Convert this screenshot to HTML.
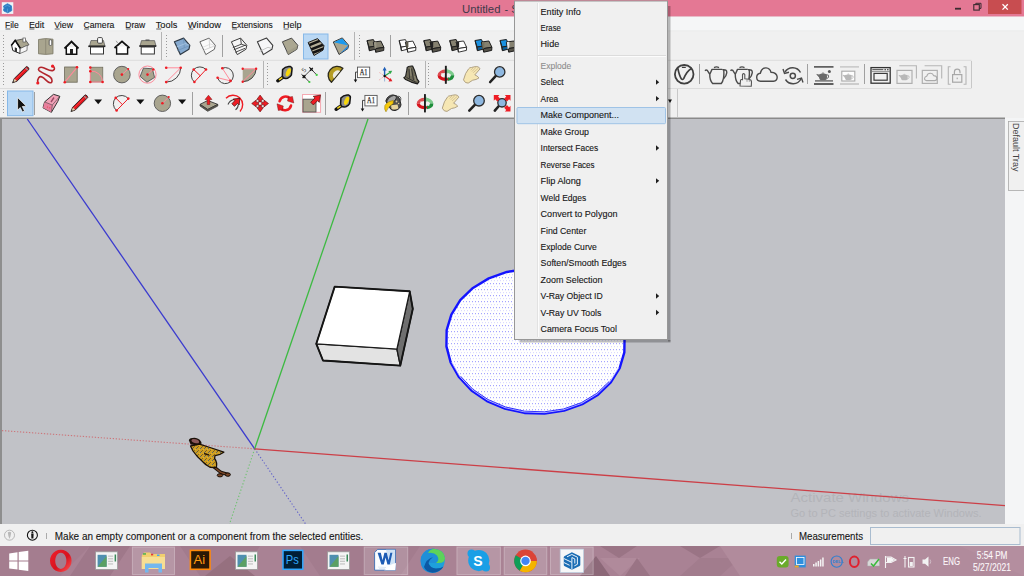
<!DOCTYPE html>
<html><head><meta charset="utf-8"><style>
html,body{margin:0;padding:0;width:1024px;height:576px;overflow:hidden;background:#f0f0f0}
svg{display:block;font-family:'Liberation Sans',sans-serif}
</style></head><body>
<svg width="1024" height="576" viewBox="0 0 1024 576" style="font-family:'Liberation Sans',sans-serif">
<rect x="0" y="0" width="1024" height="576" fill="#f0f0f0"/>
<rect x="0" y="0" width="1024" height="16.5" fill="#e47894"/>
<rect x="0" y="16" width="1024" height="0.7" fill="#d46a86"/>
<rect x="0" y="16.5" width="1024" height="14.5" fill="#f5f6f7"/>
<rect x="0" y="30.5" width="1024" height="1" fill="#e8e8e8"/>
<text x="462" y="12.6" font-size="11" fill="#3f3a4a" textLength="38.5" lengthAdjust="spacingAndGlyphs">Untitled</text><text x="504.5" y="12.6" font-size="11" fill="#3f3a4a">- S</text>
<rect x="1.8" y="2.2" width="11.5" height="11.7" fill="#eef4f8"/>
<path d="M7.5 3.7 L11.4 5.8 L11.8 10.6 L7.8 12.8 L3.8 11 L3.6 8.8 L4.8 8.2 L3.5 7.2 L3.8 5.8 Z" fill="#2b7bc2" stroke="#2b7bc2" stroke-width="0.8" stroke-linejoin="round"/>
<path d="M4.6 6.6 L7.4 5.4 L10 6.6 M7.4 8.6 L7.4 12" fill="none" stroke="#6aaee0" stroke-width="0.6"/>
<rect x="988" y="0" width="33.5" height="14" fill="#c84d50"/>
<path d="M1002.5 4.3 L1007.8 9.6 M1007.8 4.3 L1002.5 9.6" stroke="#fff" stroke-width="1.3"/>
<rect x="955" y="7.8" width="6" height="1.8" fill="#3a2a30"/>
<rect x="973.8" y="4.6" width="5.5" height="5.5" fill="none" stroke="#3a2a30" stroke-width="1.1"/>
<path d="M975.8 4.6 V3.3 H981 V8.4 H979.3" fill="none" stroke="#3a2a30" stroke-width="1"/>
<text x="5.0" y="28" font-size="9.5" fill="#151515" stroke="#151515" stroke-width="0.12" textLength="13.75" lengthAdjust="spacingAndGlyphs">File</text>
<rect x="5.5" y="28.6" width="5" height="0.8" fill="#333"/>
<text x="28.9" y="28" font-size="9.5" fill="#151515" stroke="#151515" stroke-width="0.12" textLength="15.300000000000004" lengthAdjust="spacingAndGlyphs">Edit</text>
<rect x="29.4" y="28.6" width="5" height="0.8" fill="#333"/>
<text x="54.2" y="28" font-size="9.5" fill="#151515" stroke="#151515" stroke-width="0.12" textLength="18.799999999999997" lengthAdjust="spacingAndGlyphs">View</text>
<rect x="54.7" y="28.6" width="5" height="0.8" fill="#333"/>
<text x="83.5" y="28" font-size="9.5" fill="#151515" stroke="#151515" stroke-width="0.12" textLength="30.900000000000006" lengthAdjust="spacingAndGlyphs">Camera</text>
<rect x="84" y="28.6" width="5" height="0.8" fill="#333"/>
<text x="125.3" y="28" font-size="9.5" fill="#151515" stroke="#151515" stroke-width="0.12" textLength="20.000000000000014" lengthAdjust="spacingAndGlyphs">Draw</text>
<rect x="125.8" y="28.6" width="5" height="0.8" fill="#333"/>
<text x="155.75" y="28" font-size="9.5" fill="#151515" stroke="#151515" stroke-width="0.12" textLength="21.55000000000001" lengthAdjust="spacingAndGlyphs">Tools</text>
<rect x="156.25" y="28.6" width="5" height="0.8" fill="#333"/>
<text x="187.8" y="28" font-size="9.5" fill="#151515" stroke="#151515" stroke-width="0.12" textLength="33.19999999999999" lengthAdjust="spacingAndGlyphs">Window</text>
<rect x="188.3" y="28.6" width="5" height="0.8" fill="#333"/>
<text x="231.5" y="28" font-size="9.5" fill="#151515" stroke="#151515" stroke-width="0.12" textLength="41.19999999999999" lengthAdjust="spacingAndGlyphs">Extensions</text>
<rect x="232" y="28.6" width="5" height="0.8" fill="#333"/>
<text x="283.1" y="28" font-size="9.5" fill="#151515" stroke="#151515" stroke-width="0.12" textLength="18.5" lengthAdjust="spacingAndGlyphs">Help</text>
<rect x="283.6" y="28.6" width="5" height="0.8" fill="#333"/>
<rect x="0" y="31.5" width="1024" height="86.5" fill="#f0f0f0"/>
<rect x="0" y="59.8" width="971.5" height="1" fill="#dcdcdc"/>
<rect x="0" y="88" width="971.5" height="1" fill="#dcdcdc"/>
<rect x="3" y="35" width="1" height="1" fill="#9a9a9a"/>
<rect x="3" y="38" width="1" height="1" fill="#9a9a9a"/>
<rect x="3" y="41" width="1" height="1" fill="#9a9a9a"/>
<rect x="3" y="44" width="1" height="1" fill="#9a9a9a"/>
<rect x="3" y="47" width="1" height="1" fill="#9a9a9a"/>
<rect x="3" y="50" width="1" height="1" fill="#9a9a9a"/>
<rect x="3" y="53" width="1" height="1" fill="#9a9a9a"/>
<rect x="3" y="56" width="1" height="1" fill="#9a9a9a"/>
<rect x="166" y="35" width="1" height="1" fill="#9a9a9a"/>
<rect x="166" y="38" width="1" height="1" fill="#9a9a9a"/>
<rect x="166" y="41" width="1" height="1" fill="#9a9a9a"/>
<rect x="166" y="44" width="1" height="1" fill="#9a9a9a"/>
<rect x="166" y="47" width="1" height="1" fill="#9a9a9a"/>
<rect x="166" y="50" width="1" height="1" fill="#9a9a9a"/>
<rect x="166" y="53" width="1" height="1" fill="#9a9a9a"/>
<rect x="166" y="56" width="1" height="1" fill="#9a9a9a"/>
<rect x="359" y="35" width="1" height="1" fill="#9a9a9a"/>
<rect x="359" y="38" width="1" height="1" fill="#9a9a9a"/>
<rect x="359" y="41" width="1" height="1" fill="#9a9a9a"/>
<rect x="359" y="44" width="1" height="1" fill="#9a9a9a"/>
<rect x="359" y="47" width="1" height="1" fill="#9a9a9a"/>
<rect x="359" y="50" width="1" height="1" fill="#9a9a9a"/>
<rect x="359" y="53" width="1" height="1" fill="#9a9a9a"/>
<rect x="359" y="56" width="1" height="1" fill="#9a9a9a"/>
<rect x="161" y="32" width="1" height="28" fill="#b4b4b4"/>
<rect x="354" y="32" width="1" height="28" fill="#b4b4b4"/>
<rect x="222" y="35" width="1" height="22" fill="#a0a0a0"/>
<rect x="390" y="35" width="1" height="22" fill="#a0a0a0"/>
<rect x="3" y="63" width="1" height="1" fill="#9a9a9a"/>
<rect x="3" y="66" width="1" height="1" fill="#9a9a9a"/>
<rect x="3" y="69" width="1" height="1" fill="#9a9a9a"/>
<rect x="3" y="72" width="1" height="1" fill="#9a9a9a"/>
<rect x="3" y="75" width="1" height="1" fill="#9a9a9a"/>
<rect x="3" y="78" width="1" height="1" fill="#9a9a9a"/>
<rect x="3" y="81" width="1" height="1" fill="#9a9a9a"/>
<rect x="3" y="84" width="1" height="1" fill="#9a9a9a"/>
<rect x="267" y="63" width="1" height="1" fill="#9a9a9a"/>
<rect x="267" y="66" width="1" height="1" fill="#9a9a9a"/>
<rect x="267" y="69" width="1" height="1" fill="#9a9a9a"/>
<rect x="267" y="72" width="1" height="1" fill="#9a9a9a"/>
<rect x="267" y="75" width="1" height="1" fill="#9a9a9a"/>
<rect x="267" y="78" width="1" height="1" fill="#9a9a9a"/>
<rect x="267" y="81" width="1" height="1" fill="#9a9a9a"/>
<rect x="267" y="84" width="1" height="1" fill="#9a9a9a"/>
<rect x="428" y="63" width="1" height="1" fill="#9a9a9a"/>
<rect x="428" y="66" width="1" height="1" fill="#9a9a9a"/>
<rect x="428" y="69" width="1" height="1" fill="#9a9a9a"/>
<rect x="428" y="72" width="1" height="1" fill="#9a9a9a"/>
<rect x="428" y="75" width="1" height="1" fill="#9a9a9a"/>
<rect x="428" y="78" width="1" height="1" fill="#9a9a9a"/>
<rect x="428" y="81" width="1" height="1" fill="#9a9a9a"/>
<rect x="428" y="84" width="1" height="1" fill="#9a9a9a"/>
<rect x="263" y="61" width="1" height="27" fill="#b4b4b4"/>
<rect x="425" y="61" width="1" height="27" fill="#b4b4b4"/>
<rect x="3" y="91" width="1" height="1" fill="#9a9a9a"/>
<rect x="3" y="94" width="1" height="1" fill="#9a9a9a"/>
<rect x="3" y="97" width="1" height="1" fill="#9a9a9a"/>
<rect x="3" y="100" width="1" height="1" fill="#9a9a9a"/>
<rect x="3" y="103" width="1" height="1" fill="#9a9a9a"/>
<rect x="3" y="106" width="1" height="1" fill="#9a9a9a"/>
<rect x="3" y="109" width="1" height="1" fill="#9a9a9a"/>
<rect x="3" y="112" width="1" height="1" fill="#9a9a9a"/>
<rect x="34" y="92" width="1" height="23" fill="#a0a0a0"/>
<rect x="192" y="92" width="1" height="23" fill="#a0a0a0"/>
<rect x="325" y="92" width="1" height="23" fill="#a0a0a0"/>
<rect x="408" y="92" width="1" height="23" fill="#a0a0a0"/>
<rect x="514" y="88" width="1" height="29" fill="#b4b4b4"/>
<rect x="699" y="64" width="1" height="20" fill="#a0a0a0"/>
<rect x="807" y="64" width="1" height="20" fill="#a0a0a0"/>
<rect x="864" y="64" width="1" height="20" fill="#a0a0a0"/>
<rect x="971" y="61" width="1" height="27" fill="#c8c8c8"/>
<rect x="677" y="89" width="1" height="28" fill="#c8c8c8"/>
<path d="M668 99.5 L672 99.5 L670 103 Z" fill="#111"/>
<rect x="303.5" y="34" width="24.5" height="25" fill="#bad8f4" stroke="#86b8e8" stroke-width="1"/>
<rect x="7.5" y="91" width="25.5" height="24.7" fill="#bad8f4" stroke="#86b8e8" stroke-width="1"/>
<path d="M15.2 40.5 L24.6 38.7 L29 44.8 L20.3 48.5 Z" fill="#a9a58f" stroke="#444" stroke-width="0.8"/>
<rect x="23" y="38" width="2.6" height="4" fill="#fff" stroke="#555" stroke-width="0.7"/>
<path d="M11.6 45.2 L15.2 40.5 L20.3 48.5 L20 53.5 L12.8 50.5 Z" fill="#fff" stroke="#222" stroke-width="1"/>
<path d="M11.3 45.5 L15.2 40.3 L20.6 48.8" fill="none" stroke="#111" stroke-width="1.6"/>
<path d="M14.8 47.2 L17 48.3 L17 52.3 L14.8 51.2 Z" fill="#333"/>
<path d="M20.3 48.5 L27.2 45.3 L27 50.5 L20 53.5 Z" fill="#f6f6f6" stroke="#555" stroke-width="0.7"/>
<path d="M38.5 39.5 Q45.5 37.8 53 39.2 L53 53.8 Q45.5 55 38.5 53.8 Z" fill="#a9a58f" stroke="#7a7766" stroke-width="0.8"/>
<rect x="45.3" y="38.5" width="0.9" height="16" fill="#8a8774"/>
<rect x="49.2" y="39.8" width="2.6" height="5.6" rx="1" fill="#fff" stroke="#444" stroke-width="0.8"/>
<path d="M64.5 48.5 L71.5 41.5 L78.5 48.5" fill="none" stroke="#111" stroke-width="1.8"/>
<path d="M66.3 47 L66.3 54.3 L76.7 54.3 L76.7 47" fill="#fff" stroke="#111" stroke-width="1.5"/>
<rect x="70" y="49" width="3" height="5.3" fill="#222"/>
<path d="M89.5 46.3 L91 40.5 L103.5 40.5 L105 46.3 Z" fill="#a9a58f" stroke="#555" stroke-width="0.7"/>
<rect x="88.3" y="45.5" width="17" height="1.6" fill="#222"/>
<rect x="90.5" y="47" width="13" height="7" fill="#fff" stroke="#333" stroke-width="1"/>
<rect x="97.6" y="37.6" width="4.8" height="5.6" rx="1" fill="#fff" stroke="#333" stroke-width="0.9"/>
<path d="M114.5 48 L122 41.3 L129.5 48" fill="none" stroke="#111" stroke-width="1.7"/>
<path d="M116.6 46.5 L116.6 54 L127.6 54 L127.6 46.5" fill="#fff" stroke="#111" stroke-width="1.4"/>
<path d="M116.2 40.8 L117.6 43" stroke="#888" stroke-width="0.8"/>
<path d="M140 46 L141.5 40.6 L154.5 40.6 L156 46 Z" fill="#a9a58f" stroke="#555" stroke-width="0.7"/>
<rect x="139.3" y="45.3" width="17" height="1.6" fill="#222"/>
<rect x="141.2" y="47" width="13.2" height="7" fill="#fff" stroke="#333" stroke-width="1"/>
<rect x="145.5" y="39.5" width="4" height="1.3" fill="#555"/>
<polygon points="174.4,41.8 183.6,38.1 189.8,45.3 188.9,49.3 180.3,54.6" fill="#86aad0" stroke="#2f3a45" stroke-width="1.2" stroke-linejoin="round"/>
<path d="M183.6 38.4 L184.3 47.8 L177.3 50.6 M184.3 47.8 L189.3 45.8" fill="none" stroke="#6a8fb5" stroke-width="0.7"/>
<path d="M176.5 47 L185.5 43.5 L189 45" fill="none" stroke="#a9c6e2" stroke-width="0.8"/>
<polygon points="199.9,41.8 209.1,38.1 215.3,45.3 214.4,49.3 205.8,54.6" fill="#fbfbfb" stroke="#555" stroke-width="0.9" stroke-linejoin="round"/>
<path d="M209.1 38.4 L209.8 47.8 L202.8 50.6 M209.8 47.8 L214.8 45.8" fill="none" stroke="#c4c4c4" stroke-width="0.7"/>
<path d="M202.5 47.5 L210.5 44 L214.8 45.5" fill="none" stroke="#d0d0d0" stroke-width="0.6"/>
<polygon points="231.4,41.8 240.6,38.1 246.8,45.3 245.9,49.3 237.3,54.6" fill="#f7f7f7" stroke="#3a3a3a" stroke-width="1.0" stroke-linejoin="round"/>
<path d="M240.6 38.4 L241.3 44.2 L246.3 45.8 M241.3 44.2 L232.8 47.6 M233.8 49.8 L245.3 45.2 M235.3 52.3 L245 48.3" fill="none" stroke="#3a3a3a" stroke-width="0.9"/>
<polygon points="257.4,41.8 266.6,38.1 272.8,45.3 271.9,49.3 263.3,54.6" fill="#f6f6f8" stroke="#3a3a3a" stroke-width="1.1" stroke-linejoin="round"/>
<path d="M259.5 51.5 L268 47.3 L271.8 48.5" fill="none" stroke="#b0b0b0" stroke-width="0.7"/>
<polygon points="282.4,41.8 291.6,38.1 297.8,45.3 296.9,49.3 288.3,54.6" fill="#aba791" stroke="#4a4a4a" stroke-width="1.0" stroke-linejoin="round"/>
<path d="M286 52.5 L288.3 54.3 L297 49.2 L297.6 45.8 Z" fill="#9a9682" opacity="0.6"/>
<defs><clipPath id="cc6"><polygon points="308.1,42.5 317.6,38.6 324,45.7 323,50.1 314,55.5"/></clipPath></defs>
<polygon points="308.1,42.5 317.6,38.6 324,45.7 323,50.1 314,55.5" fill="#b4ae98"/>
<g clip-path="url(#cc6)"><path d="M300 43.5 L330 31.5 M302 48 L332 36 M304 52.3 L334 40.3 M306 55.5 L336 43.5" stroke="#141414" stroke-width="2.6"/></g>
<polygon points="308.1,42.5 317.6,38.6 324,45.7 323,50.1 314,55.5" fill="none" stroke="#1e1e1e" stroke-width="1" stroke-linejoin="round"/>
<polygon points="333.25,42 342.3,37.9 348.6,45.2 347.9,48.6 339.1,54.5" fill="#a9a58f" stroke="#3a3a3a" stroke-width="1" stroke-linejoin="round"/>
<path d="M333.8 42.2 L342.3 38.4 L348.2 45.4 Z" fill="#1a9af0"/>
<path d="M348.2 45.6 L347.6 48.5 L339.8 53.8 Z" fill="#1e88e5"/>
<polygon points="367,40.6 373.4,39.6 376.4,45.8 369.2,47.2" fill="#858170" stroke="#1e1e1e" stroke-width="1" stroke-linejoin="round"/>
<polygon points="369.2,47.2 376.4,45.8 376.2,49 369.4,50.8" fill="#57544a" stroke="#1e1e1e" stroke-width="1" stroke-linejoin="round"/>
<path d="M367.1 40.8 L369.4 50.6" stroke="#1e1e1e" stroke-width="1"/>
<polygon points="373.3,42.1 380.9,41.1 383.9,47.3 375.5,48.7" fill="#858170" stroke="#1e1e1e" stroke-width="1" stroke-linejoin="round"/>
<polygon points="375.5,48.7 383.9,47.3 383.7,50.5 375.7,52.3" fill="#57544a" stroke="#1e1e1e" stroke-width="1" stroke-linejoin="round"/>
<path d="M373.4 42.3 L375.7 52.1" stroke="#1e1e1e" stroke-width="1"/>
<polygon points="373.8,42.2 376.4,41.8 376.4,46.6 375.4,49.1 374.6,49.3" fill="#9a9684"/>
<polygon points="399,40.6 405.4,39.6 408.4,45.8 401.2,47.2" fill="#fff" stroke="#222" stroke-width="0.9" stroke-linejoin="round"/>
<polygon points="401.2,47.2 408.4,45.8 408.2,49 401.4,50.8" fill="#fff" stroke="#222" stroke-width="0.9" stroke-linejoin="round"/>
<path d="M399.3 40.8 L401.4 50.6" stroke="#222" stroke-width="0.9"/>
<polygon points="405.3,42.1 412.9,41.1 415.9,47.3 407.5,48.7" fill="#fff" stroke="#222" stroke-width="0.9" stroke-linejoin="round"/>
<polygon points="407.5,48.7 415.9,47.3 415.7,50.5 407.7,52.3" fill="#fff" stroke="#222" stroke-width="0.9" stroke-linejoin="round"/>
<path d="M405.6 42.3 L407.7 52.1" stroke="#222" stroke-width="0.9"/>
<polygon points="405.8,42.2 408.4,41.8 408.4,46.6 407.4,49.1 406.6,49.3" fill="#5d5a4c"/>
<polygon points="423.8,40.6 430.2,39.6 433.2,45.8 426,47.2" fill="#858170" stroke="#1e1e1e" stroke-width="1" stroke-linejoin="round"/>
<polygon points="426,47.2 433.2,45.8 433,49 426.2,50.8" fill="#57544a" stroke="#1e1e1e" stroke-width="1" stroke-linejoin="round"/>
<path d="M423.9 40.8 L426.2 50.6" stroke="#1e1e1e" stroke-width="1"/>
<polygon points="430.1,42.1 437.7,41.1 440.7,47.3 432.3,48.7" fill="#858170" stroke="#1e1e1e" stroke-width="1" stroke-linejoin="round"/>
<polygon points="432.3,48.7 440.7,47.3 440.5,50.5 432.5,52.3" fill="#57544a" stroke="#1e1e1e" stroke-width="1" stroke-linejoin="round"/>
<path d="M430.2 42.3 L432.5 52.1" stroke="#1e1e1e" stroke-width="1"/>
<polygon points="430.6,42.2 433.2,41.8 433.2,46.6 432.2,49.1 431.4,49.3" fill="#222"/>
<polygon points="449.7,40.5 456.1,39.5 459.1,45.7 451.9,47.1" fill="#858170" stroke="#1e1e1e" stroke-width="1" stroke-linejoin="round"/>
<polygon points="451.9,47.1 459.1,45.7 458.9,48.9 452.1,50.7" fill="#57544a" stroke="#1e1e1e" stroke-width="1" stroke-linejoin="round"/>
<path d="M449.8 40.7 L452.1 50.5" stroke="#1e1e1e" stroke-width="1"/>
<polygon points="456,42 463.6,41 466.6,47.2 458.2,48.6" fill="#fff" stroke="#222" stroke-width="0.9" stroke-linejoin="round"/>
<polygon points="458.2,48.6 466.6,47.2 466.4,50.4 458.4,52.2" fill="#fff" stroke="#222" stroke-width="0.9" stroke-linejoin="round"/>
<path d="M456.3 42.2 L458.4 52" stroke="#222" stroke-width="0.9"/>
<polygon points="456.5,42.1 459.1,41.7 459.1,46.5 458.1,49 457.3,49.2" fill="#222"/>
<polygon points="475,40.5 481.4,39.5 484.4,45.7 477.2,47.1" fill="#1a90e0" stroke="#1e1e1e" stroke-width="1" stroke-linejoin="round"/>
<polygon points="477.2,47.1 484.4,45.7 484.2,48.9 477.4,50.7" fill="#0d5f9a" stroke="#1e1e1e" stroke-width="1" stroke-linejoin="round"/>
<path d="M475.1 40.7 L477.4 50.5" stroke="#1e1e1e" stroke-width="1"/>
<polygon points="481.3,42 488.9,41 491.9,47.2 483.5,48.6" fill="#858170" stroke="#1e1e1e" stroke-width="1" stroke-linejoin="round"/>
<polygon points="483.5,48.6 491.9,47.2 491.7,50.4 483.7,52.2" fill="#57544a" stroke="#1e1e1e" stroke-width="1" stroke-linejoin="round"/>
<path d="M481.4 42.2 L483.7 52" stroke="#1e1e1e" stroke-width="1"/>
<polygon points="481.8,42.1 484.4,41.7 484.4,46.5 483.4,49 482.6,49.2" fill="#77735f"/>
<polygon points="500,40.5 506.4,39.5 509.4,45.7 502.2,47.1" fill="#1a90e0" stroke="#1e1e1e" stroke-width="1" stroke-linejoin="round"/>
<polygon points="502.2,47.1 509.4,45.7 509.2,48.9 502.4,50.7" fill="#0d5f9a" stroke="#1e1e1e" stroke-width="1" stroke-linejoin="round"/>
<path d="M500.1 40.7 L502.4 50.5" stroke="#1e1e1e" stroke-width="1"/>
<polygon points="506.3,42 513.9,41 516.9,47.2 508.5,48.6" fill="#858170" stroke="#1e1e1e" stroke-width="1" stroke-linejoin="round"/>
<polygon points="508.5,48.6 516.9,47.2 516.7,50.4 508.7,52.2" fill="#57544a" stroke="#1e1e1e" stroke-width="1" stroke-linejoin="round"/>
<path d="M506.4 42.2 L508.7 52" stroke="#1e1e1e" stroke-width="1"/>
<polygon points="506.8,42.1 509.4,41.7 509.4,46.5 508.4,49 507.6,49.2" fill="#e6e6e6"/>
<g transform="translate(12.6,82.8) rotate(-44.63)"><path d="M0 0 L4.2 -1.9 L21.26 -1.9 Q22.66 0 21.26 1.9 L4.2 1.9 Z" fill="#e3141c" stroke="#2a2a2a" stroke-width="0.9" stroke-linejoin="round"/><path d="M0.3 0 L4.4 -1.5 L4.4 1.5 Z" fill="#d9cfa8"/><path d="M0 0 L1.8 -0.7 L1.8 0.7 Z" fill="#222"/><rect x="19.06" y="-1.5" width="1.2" height="3" fill="#9a9a9a"/><path d="M4.4 -0.4 L18.86 -0.4" stroke="#ff5a5a" stroke-width="0.5"/></g>
<path d="M37.8 83 C37 78.5 39.5 75.5 42.5 77.2 C45 78.5 47.5 82.5 50 82.8 C53 83 52.5 78.5 49.5 76.5 C46.5 74.5 41 72.5 39 70.5 C37.5 68.5 39.5 66.8 42.5 67.5 C46 68.3 49.5 71.5 53 70.5 C55.5 69.5 54.5 66.8 52.5 66.2" fill="none" stroke="#b3262d" stroke-width="1.6"/>
<circle cx="37.8" cy="83" r="1.6" fill="#ee1c24"/><circle cx="52.6" cy="66.2" r="1.6" fill="#ee1c24"/>
<rect x="64.6" y="67" width="12.6" height="15.2" fill="#a9a58f" stroke="#6b6858" stroke-width="0.8"/>
<path d="M64.8 82.2 L77 67.3" stroke="#ff8a9a" stroke-width="1.1"/>
<circle cx="64.8" cy="82.2" r="1.3" fill="#ee1c24"/><circle cx="77" cy="67.3" r="1.3" fill="#ee1c24"/>
<rect x="90.5" y="67.2" width="12.3" height="14.8" fill="#a9a58f" stroke="#6b6858" stroke-width="0.7"/>
<path d="M90.3 71.2 A11 11 0 0 1 102.6 82 M90.3 67.5 L90.3 82 L102.6 82" fill="none" stroke="#ff8a9a" stroke-width="1"/>
<circle cx="90.3" cy="67.5" r="1.3" fill="#ee1c24"/>
<circle cx="90.3" cy="71.2" r="1.3" fill="#ee1c24"/>
<circle cx="90.3" cy="82" r="1.3" fill="#ee1c24"/>
<circle cx="102.6" cy="82" r="1.3" fill="#ee1c24"/>
<circle cx="121.9" cy="74.6" r="8.3" fill="#a9a58f" stroke="#555" stroke-width="0.9"/>
<path d="M121.9 74.6 L128.2 69" stroke="#ff8a9a" stroke-width="1"/>
<circle cx="121.9" cy="74.6" r="1.3" fill="#ee1c24"/><circle cx="128.2" cy="69" r="1.1" fill="#ee1c24"/>
<circle cx="147.5" cy="74.6" r="8.6" fill="none" stroke="#ff8a9a" stroke-width="1"/>
<polygon points="152.39,68.78 154.55,77.45 146.97,82.18 140.13,76.44 143.47,68.15" fill="#a9a58f" stroke="#555" stroke-width="0.9"/>
<path d="M147.5 74.6 L153.2 69.5" stroke="#ff8a9a" stroke-width="1"/>
<circle cx="147.5" cy="74.6" r="1.3" fill="#ee1c24"/><circle cx="153.3" cy="69.4" r="1.2" fill="#ee1c24"/>
<path d="M180.7 67.8 A14.5 14.3 0 0 1 166.2 82.1" fill="none" stroke="#444" stroke-width="1"/>
<path d="M166.2 67.8 L180.7 67.8 L166.2 82.1" fill="none" stroke="#ff8a9a" stroke-width="1"/>
<circle cx="166.2" cy="67.8" r="1.3" fill="#ee1c24"/>
<circle cx="180.7" cy="67.8" r="1.3" fill="#ee1c24"/>
<circle cx="166.2" cy="82.1" r="1.3" fill="#ee1c24"/>
<path d="M193.7 69.5 A8.6 8.6 0 0 1 206 69.5 M193.7 69.5 A8.6 8.6 0 0 0 194.4 82" fill="none" stroke="#444" stroke-width="1"/>
<path d="M193.7 69.5 L200.3 75.8 M206 69.5 L194.4 82" fill="none" stroke="#ee1c24" stroke-width="1"/>
<circle cx="193.7" cy="69.5" r="1.3" fill="#ee1c24"/>
<circle cx="206" cy="69.5" r="1.3" fill="#ee1c24"/>
<circle cx="194.4" cy="82" r="1.3" fill="#ee1c24"/>
<path d="M222.3 68.2 A8 8 0 1 1 217.6 77.7" fill="none" stroke="#444" stroke-width="1"/>
<path d="M222.3 68.2 L230.5 80.9 L217.6 77.7" fill="none" stroke="#ff8a9a" stroke-width="1"/>
<circle cx="222.3" cy="68.2" r="1.3" fill="#ee1c24"/>
<circle cx="217.6" cy="77.7" r="1.3" fill="#ee1c24"/>
<circle cx="230.5" cy="80.9" r="1.3" fill="#ee1c24"/>
<path d="M242.7 68.8 L256.1 68.8 A13.4 13 0 0 1 242.7 81.7 Z" fill="#a9a58f"/><path d="M256.1 68.8 A13.4 13 0 0 1 242.7 81.7" fill="none" stroke="#333" stroke-width="0.9"/>
<path d="M242.7 68.8 L256.1 68.8 L242.7 81.7" fill="none" stroke="#ff8a9a" stroke-width="1"/>
<circle cx="242.7" cy="68.8" r="1.2" fill="#ee1c24"/>
<circle cx="256.1" cy="68.8" r="1.2" fill="#ee1c24"/>
<circle cx="242.7" cy="81.7" r="1.2" fill="#ee1c24"/>
<path d="M283.8 76.6 L277.8 80.8" stroke="#111" stroke-width="3.4" stroke-linecap="round"/>
<path d="M284 76.4 L279 79.9" stroke="#f2d21b" stroke-width="1.6"/>
<path d="M282.6 69.4 Q285 66.6 288.7 66.4 L290.5 66.6 Q292.5 67.5 292 69.5 L291.4 75 Q290.5 77 287.5 78.2 L285.8 78.5 Q282.5 78.5 282.3 75.5 Z" fill="#8d8d8d" stroke="#151515" stroke-width="1.5" stroke-linejoin="round"/>
<ellipse cx="288.3" cy="72.3" rx="2.1" ry="4.3" transform="rotate(22 288.3 72.3)" fill="#f7d70a"/>
<path d="M301.4 74.2 L304 76.6 L309.4 82 M309 67.1 L311.4 69.3 L316.7 74.9 M304 76.6 L311.4 69.3" fill="none" stroke="#333" stroke-width="0.9"/>
<path d="M302.6 75.2 L305.4 78 M302.6 78 L305.4 75.2 M310 67.9 L312.8 70.7 M310 70.7 L312.8 67.9" stroke="#111" stroke-width="1.3"/>
<circle cx="309.4" cy="82" r="1.1" fill="#3fcf3f"/><circle cx="316.7" cy="74.9" r="1.1" fill="#3fcf3f"/>
<text x="302" y="72" font-size="6.5" fill="#444" transform="rotate(-45 304.3 69.8)">5</text>
<path d="M331.4 82.3 A9.04 9.04 0 0 1 342.9 68.35 Z" fill="#b59c22" stroke="#2c2a1c" stroke-width="1.3" stroke-linejoin="round"/>
<path d="M334 78.5 A5 5 0 0 1 340.2 71 Z" fill="#ecebe2"/>
<rect x="357.5" y="67.1" width="12.2" height="10.5" fill="#fff" stroke="#555" stroke-width="0.9"/>
<text x="359.7" y="74.7" font-size="7.2" font-family="Liberation Serif" fill="#3a3a3a" stroke="#3a3a3a" stroke-width="0.25" textLength="7.8" lengthAdjust="spacingAndGlyphs">A1</text>
<path d="M357.5 72.1 L355.5 72.1 L355.5 80" fill="none" stroke="#333" stroke-width="0.9"/>
<path d="M353.7 79.5 L357.3 79.5 L355.5 82.5 Z" fill="#111"/>
<path d="M384.6 76 L384.6 81.5" stroke="#9cb8d8" stroke-width="1"/>
<path d="M384.6 76 L379 72.3 M384.6 76 L378.5 80.5" stroke="#f0a0a0" stroke-width="0.9" stroke-dasharray="1 1"/>
<path d="M384.6 76 L384.6 69.5" stroke="#1f5fb8" stroke-width="1.4"/><path d="M382.6 70.5 L384.6 66.8 L386.6 70.5 Z" fill="#1f5fb8"/>
<path d="M384.6 76 L390 72.5" stroke="#2ea84a" stroke-width="1.4"/><path d="M388.3 71 L392.2 70.8 L390.6 74 Z" fill="#2ea84a"/>
<path d="M384.6 76 L390 79.8" stroke="#e11d25" stroke-width="1.4"/><path d="M388.5 81.5 L392.4 81.3 L390.6 78 Z" fill="#e11d25"/>
<circle cx="384.6" cy="76" r="1.2" fill="#111"/>
<path d="M407.2 67.4 Q408.4 65.7 412.6 66 L414.6 70.5 L417.2 79.2 L419 81.6 L417.4 83.9 L411.2 82.1 L405.6 79.6 L403.8 77.6 L405.6 76.4 L406.8 70.2 Z" fill="#6e6a58" stroke="#1c1c1c" stroke-width="1.1" stroke-linejoin="round"/>
<path d="M409 69 L409.6 78.5 M411.6 68.5 L413.5 80 M406.5 77.5 L416.5 82.5" stroke="#2a2a2a" stroke-width="0.8"/>
<path d="M410.3 68 L411 76 M414.5 76 L416 81" stroke="#a8a48e" stroke-width="0.6"/>
<path d="M439.2 75.2 A6.7 4.1 0 0 1 445.9 71.1" fill="none" stroke="#dd4a50" stroke-width="3.3"/>
<path d="M452.6 75.2 A6.7 4.1 0 0 0 445.9 71.1" fill="none" stroke="#7cca8c" stroke-width="3.3"/>
<path d="M439.2 75.2 A6.7 4.1 0 0 0 445.4 79.3" fill="none" stroke="#d7141c" stroke-width="3.4"/>
<path d="M452.6 75.2 A6.7 4.1 0 0 1 447.4 79.3" fill="none" stroke="#1d8e3a" stroke-width="3.3"/>
<path d="M444.9 76.3 L448.5 79.3 L444.9 82.3 Z" fill="#d7141c"/>
<path d="M447.4 68.3 L444.3 71.1 L447.4 73.9 Z" fill="#7cca8c"/>
<path d="M441.4 73.4 L443.7 74.6 M448.3 76.2 L450.1 77.2" stroke="#f4f4f4" stroke-width="1.1"/>
<rect x="444.9" y="65.8" width="1.9" height="18" fill="#1e1e1e"/>
<path d="M463.5 79.9 Q465.2 72.7 468.6 68.9 Q469.7 67.3 471.4 67.5 L473.7 66.9 L476.7 66.5 Q479.2 66.6 480 68.9 L474.8 74.9 Q477.2 75.7 479 77.9 Q476.2 79.9 472.7 80.2 L468.2 83.1 Q465.2 83.5 463.5 79.9 Z" fill="#f6e7b4" stroke="#a8987a" stroke-width="0.9" stroke-linejoin="round"/>
<path d="M470.7 70.2 L473.7 67.3 M472 71.5 L476.2 67.1 M473.2 72.7 L478.4 68.1" stroke="#c8b48a" stroke-width="0.7"/>
<path d="M496.06 75.54 L490.2 82" stroke="#222" stroke-width="2.6" stroke-linecap="round"/>
<circle cx="499.7" cy="71.9" r="5.2" fill="#8fb8e0" stroke="#2b2b2b" stroke-width="1.3"/>
<circle cx="684.2" cy="74.3" r="9.3" fill="none" stroke="#3e3e3e" stroke-width="1.8"/>
<path d="M677.9 68.6 Q679.3 75.5 681.3 78.8 Q682.6 80.4 683.8 78.4 Q686.8 71 691.4 68.4" fill="none" stroke="#3e3e3e" stroke-width="1.7" stroke-linecap="round"/>
<path d="M682.5 67.4 L685.2 67.4" stroke="#3e3e3e" stroke-width="1.4" stroke-linecap="round"/>
<path d="M705 70.8 Q706 69.6 707.3 70.4 L709.8 74.3 L712 69.4 L722.3 69.4 M709.8 74.3 Q709.6 80.5 712.6 83.5 L721.3 83.5 Q724.5 79.5 723.8 70 M722.5 69.8 Q727 69.2 726.8 72.6 Q726.3 76.5 723.6 78.8" fill="none" stroke="#4a4a4a" stroke-width="1.4" stroke-linejoin="round"/>
<path d="M714 67.6 Q716.5 66.2 719 67.6" fill="none" stroke="#4a4a4a" stroke-width="1.3"/>
<path d="M730.5 70.8 Q731.5 69.6 732.8 70.4 L735.3 74.3 L737.5 69.4 L747.8 69.4 M735.3 74.3 Q735.1 80.5 738.1 83.5 L746.8 83.5 Q750 79.5 749.3 70 M748 69.8 Q752.5 69.2 752.3 72.6 Q751.8 76.5 749.1 78.8" fill="none" stroke="#4a4a4a" stroke-width="1.4" stroke-linejoin="round"/>
<path d="M739.5 67.6 Q742 66.2 744.5 67.6" fill="none" stroke="#4a4a4a" stroke-width="1.3"/>
<path d="M740 86 L740.5 80.5 Q741 79 742.5 79.8 L742.5 74.5 Q743.5 72.8 744.8 74.5 L744.8 78.8 L749 79.3 Q751.5 79.8 751.5 82 L751.3 86.2 Z" fill="#f0f0f0" stroke="#555" stroke-width="1.1" stroke-linejoin="round"/>
<path d="M747 79.2 L747 81.8 M749.3 79.6 L749.3 81.8" stroke="#777" stroke-width="0.7"/>
<path d="M760.5 81.2 Q756.6 81 756.7 77 Q757 73.6 760.3 73.3 Q761.5 67.8 766 67.9 Q770.2 68.3 771 72.3 Q776.8 72.6 777.2 77 Q777.2 81 773.5 81.2 Z" fill="none" stroke="#4a4a4a" stroke-width="1.4" stroke-linejoin="round"/>
<path d="M785 72 A9 9 0 0 1 800.5 72.5 M801 79 A9 9 0 0 1 785.5 79.5" fill="none" stroke="#4a4a4a" stroke-width="1.5"/>
<path d="M783 69 L784.5 73.5 L789 72.3" fill="none" stroke="#4a4a4a" stroke-width="1.4"/>
<path d="M803 82.5 L801.5 78 L797 79.3" fill="none" stroke="#4a4a4a" stroke-width="1.4"/>
<circle cx="792.8" cy="75.8" r="2.6" fill="none" stroke="#4a4a4a" stroke-width="1.5"/>
<rect x="814" y="66.2" width="19.5" height="1.4" fill="#3d3d3d"/><rect x="815" y="80.2" width="18" height="1.4" fill="#6a6a6a"/><rect x="814" y="83.2" width="19.5" height="1.6" fill="#3d3d3d"/>
<path d="M819.2 74.2 Q818.4 79.4 820.8 80.2 L825.2 80.2 Q827.6 79.4 826.8 74.2 Q823 72.8 819.2 74.2 Z" fill="#6a6a6a"/>
<path d="M819.4 77.2 L816.8 74.4 L819.2 75 Z" fill="#6a6a6a" stroke="#6a6a6a" stroke-width="0.8" stroke-linejoin="round"/>
<path d="M826.6 74.8 Q829.2 74.4 828.6 77 Q828 78.4 826.2 79" fill="none" stroke="#6a6a6a" stroke-width="1"/>
<path d="M821.4 73.4 Q823 71.4 824.6 73.4 Z" fill="#6a6a6a"/>
<circle cx="829.4" cy="71.5" r="1.5" fill="#5a5a5a"/>
<rect x="840" y="66.3" width="19" height="1.2" fill="#bcbcbc"/><rect x="840" y="83.3" width="19" height="1.4" fill="#bcbcbc"/>
<rect x="841.8" y="71.2" width="13" height="9.8" fill="#fdfdfd" stroke="#aaaaaa" stroke-width="1.1"/>
<path d="M845.07 75.1 Q844.39 79.52 846.43 80.2 L850.17 80.2 Q852.21 79.52 851.53 75.1 Q848.3 73.91 845.07 75.1 Z" fill="#b8b8b8"/>
<path d="M845.24 77.65 L843.03 75.27 L845.07 75.78 Z" fill="#b8b8b8" stroke="#b8b8b8" stroke-width="0.8" stroke-linejoin="round"/>
<path d="M851.36 75.61 Q853.57 75.27 853.06 77.48 Q852.55 78.67 851.02 79.18" fill="none" stroke="#b8b8b8" stroke-width="0.85"/>
<path d="M846.94 74.42 Q848.3 72.72 849.66 74.42 Z" fill="#b8b8b8"/>
<rect x="871" y="67.6" width="19.2" height="15.6" fill="none" stroke="#333" stroke-width="1.3"/>
<rect x="872.3" y="69.1" width="11" height="1" fill="#555"/><rect x="884.5" y="68.9" width="1.4" height="1.4" fill="#444"/><rect x="887.1" y="68.9" width="1.4" height="1.4" fill="#444"/>
<rect x="871" y="70.9" width="19.2" height="0.8" fill="#777"/>
<rect x="874" y="73.4" width="13.2" height="6.8" fill="none" stroke="#3a3a3a" stroke-width="1.2"/>
<path d="M899.3 65.8 L916.4 65.8 L916.4 78.6" fill="none" stroke="#b5b5b5" stroke-width="1.1"/>
<rect x="897" y="70.4" width="15" height="13" fill="none" stroke="#b0b0b0" stroke-width="1.2"/>
<path d="M901.07 75.2 Q900.39 79.62 902.43 80.3 L906.17 80.3 Q908.21 79.62 907.53 75.2 Q904.3 74.01 901.07 75.2 Z" fill="#b8b8b8"/>
<path d="M901.24 77.75 L899.03 75.37 L901.07 75.88 Z" fill="#b8b8b8" stroke="#b8b8b8" stroke-width="0.8" stroke-linejoin="round"/>
<path d="M907.36 75.71 Q909.57 75.37 909.06 77.58 Q908.55 78.77 907.02 79.28" fill="none" stroke="#b8b8b8" stroke-width="0.85"/>
<path d="M902.94 74.52 Q904.3 72.82 905.66 74.52 Z" fill="#b8b8b8"/>
<path d="M924.6 65.8 L941.7 65.8 L941.7 78.6" fill="none" stroke="#b5b5b5" stroke-width="1.1"/>
<rect x="922.3" y="70.4" width="15" height="13" fill="none" stroke="#b0b0b0" stroke-width="1.2"/>
<path d="M926.5 80.6 Q924.4 80.5 924.6 78.3 Q924.8 76.3 926.8 76.2 Q927.6 73.2 930.5 73.3 Q933 73.5 933.6 75.6 Q936.8 75.8 936.9 78.2 Q936.9 80.5 934.6 80.6 Z" fill="none" stroke="#aaaaaa" stroke-width="1.1" stroke-linejoin="round"/>
<path d="M950.6 66.8 L948.3 66.8 L948.3 84.2 L950.6 84.2 M963.6 66.8 L966 66.8 L966 84.2 L963.6 84.2" fill="none" stroke="#b5b5b5" stroke-width="1.1"/>
<rect x="952.6" y="74.6" width="9.2" height="7.6" fill="none" stroke="#a8a8a8" stroke-width="1.2"/>
<path d="M954.4 74.6 L954.4 72 A2.8 2.8 0 0 1 960 72 L960 73.2" fill="none" stroke="#a8a8a8" stroke-width="1.2"/>
<rect x="956.6" y="77.6" width="1.2" height="1.6" fill="#aaa"/>
<path d="M17.6 97.5 L17.6 110.3 L20.2 107.6 L22.5 112 L24.5 111 L22.3 106.5 L26.3 106.2 Z" fill="#111" stroke="#fff" stroke-width="0.7" stroke-linejoin="round"/>
<path d="M44.6 101.9 L53.5 94.3 L59.8 96.3 L57.8 101.4 L51.4 112.3 L43 107.8 Z" fill="#f2a2b8" stroke="#333" stroke-width="1" stroke-linejoin="round"/>
<path d="M44.6 102 L52.3 105 L51.4 112.2 L43.1 107.7 Z" fill="#e87f9c"/>
<path d="M44.6 101.9 L52.3 105 L59.8 96.3 M52.3 105 L51.4 112.3" fill="none" stroke="#444" stroke-width="0.6"/>
<path d="M54 97.5 L51 102" stroke="#9a4a66" stroke-width="1.4"/>
<circle cx="47.5" cy="107" r="0.6" fill="#e0404a"/><circle cx="49.8" cy="107.8" r="0.6" fill="#e0404a"/>
<g transform="translate(71,111.6) rotate(-45)"><path d="M0 0 L4.2 -1.9 L21.83 -1.9 Q23.23 0 21.83 1.9 L4.2 1.9 Z" fill="#e3141c" stroke="#2a2a2a" stroke-width="0.9" stroke-linejoin="round"/><path d="M0.3 0 L4.4 -1.5 L4.4 1.5 Z" fill="#d9cfa8"/><path d="M0 0 L1.8 -0.7 L1.8 0.7 Z" fill="#222"/><rect x="19.63" y="-1.5" width="1.2" height="3" fill="#9a9a9a"/><path d="M4.4 -0.4 L19.43 -0.4" stroke="#ff5a5a" stroke-width="0.5"/></g>
<path d="M94.3 99.5 L102.1 99.5 L98.2 104.3 Z" fill="#111"/>
<path d="M136.3 99.5 L144.4 99.5 L140.35 104.3 Z" fill="#111"/>
<path d="M178.1 99.5 L186.2 99.5 L182.15 104.3 Z" fill="#111"/>
<path d="M115.7 97.9 A8.6 8.6 0 0 1 128.3 98.6 M115.7 97.9 A8.6 8.6 0 0 0 116.6 110.5" fill="none" stroke="#444" stroke-width="1"/>
<path d="M115.7 97.9 L122 104.2 M128.3 98.6 L116.6 110.5" fill="none" stroke="#ee1c24" stroke-width="1"/>
<circle cx="115.7" cy="97.9" r="1.3" fill="#ee1c24"/>
<circle cx="128.3" cy="98.6" r="1.3" fill="#ee1c24"/>
<circle cx="116.6" cy="110.5" r="1.3" fill="#ee1c24"/>
<circle cx="162.4" cy="103.3" r="8.2" fill="#a9a58f" stroke="#555" stroke-width="0.9"/>
<path d="M162.4 103.3 L168.7 97" stroke="#ff8a9a" stroke-width="1"/>
<circle cx="162.4" cy="103.3" r="1.3" fill="#ee1c24"/><circle cx="168.7" cy="97" r="1.1" fill="#ee1c24"/>
<path d="M200 104.4 L207.7 100.5 L217.8 104.4 L207.7 109.5 Z" fill="#a9a58f" stroke="#333" stroke-width="0.9" stroke-linejoin="round"/>
<path d="M200 104.4 L200 106 L207.7 111.3 L217.8 106 L217.8 104.4 L207.7 109.5 Z" fill="#5d5b4f" stroke="#333" stroke-width="0.7"/>
<path d="M207.2 104.5 L207.2 99.5 L205 99.5 L208.5 95.2 L212 99.5 L209.8 99.5 L209.8 104.5 Z" fill="#ee1c24" stroke="#7a1010" stroke-width="0.5"/>
<path d="M226 98.2 A9.2 9.2 0 0 1 240 111.5" fill="none" stroke="#ee1c24" stroke-width="1.4"/>
<path d="M228 104.5 Q229.5 100.5 234 99.5 M238.2 104.5 Q238.3 108 235.5 109.8" fill="none" stroke="#444" stroke-width="1.1"/>
<path d="M0 -1.9 L4.2 -1.9 L4.2 -4.2 L9.5 0 L4.2 4.2 L4.2 1.9 L0 1.9 Z" transform="translate(233.2,105) rotate(-45)" fill="#ee1c24" stroke="#3a0a0a" stroke-width="0.7" stroke-linejoin="round"/>
<path d="M268.5 103.5 L264 100.1 L264 102.2 L261.7 102.2 L261.7 104.8 L264 104.8 L264 106.9 Z" transform="rotate(0 260.1 103.5)" fill="#ee1c24" stroke="#5a0f0f" stroke-width="0.6" stroke-linejoin="round"/>
<path d="M268.5 103.5 L264 100.1 L264 102.2 L261.7 102.2 L261.7 104.8 L264 104.8 L264 106.9 Z" transform="rotate(90 260.1 103.5)" fill="#ee1c24" stroke="#5a0f0f" stroke-width="0.6" stroke-linejoin="round"/>
<path d="M268.5 103.5 L264 100.1 L264 102.2 L261.7 102.2 L261.7 104.8 L264 104.8 L264 106.9 Z" transform="rotate(180 260.1 103.5)" fill="#ee1c24" stroke="#5a0f0f" stroke-width="0.6" stroke-linejoin="round"/>
<path d="M268.5 103.5 L264 100.1 L264 102.2 L261.7 102.2 L261.7 104.8 L264 104.8 L264 106.9 Z" transform="rotate(270 260.1 103.5)" fill="#ee1c24" stroke="#5a0f0f" stroke-width="0.6" stroke-linejoin="round"/>
<path d="M279.6 101.3 A6.2 6.2 0 0 1 290.2 98.6" fill="none" stroke="#ee1c24" stroke-width="2.6" stroke-linecap="round"/>
<path d="M291 105.6 A6.2 6.2 0 0 1 280.4 108.2" fill="none" stroke="#ee1c24" stroke-width="2.6" stroke-linecap="round"/>
<path d="M288.3 97.2 L292.5 96.5 L293.8 103 L287.5 101 Z" fill="#ee1c24" stroke="#5a0f0f" stroke-width="0.4"/>
<path d="M282.5 109.8 L278.3 110.5 L277 103.8 L283.3 106 Z" fill="#ee1c24" stroke="#5a0f0f" stroke-width="0.4"/>
<rect x="302.6" y="94.5" width="18" height="17.8" fill="#fff" stroke="#f4a0aa" stroke-width="0.9"/>
<rect x="303" y="99.2" width="13" height="12.8" fill="#a9a58f" stroke="#555" stroke-width="0.9"/>
<path d="M0 -1.9 L6 -1.9 L6 -4.3 L12 0 L6 4.3 L6 1.9 L0 1.9 Z" transform="translate(312,103.6) rotate(-45)" fill="#ee1c24" stroke="#3a0a0a" stroke-width="0.6" stroke-linejoin="round"/>
<path d="M342.1 105.1 L336.1 109.3" stroke="#111" stroke-width="3.4" stroke-linecap="round"/>
<path d="M342.3 104.9 L337.3 108.4" stroke="#f2d21b" stroke-width="1.6"/>
<path d="M340.9 97.9 Q343.3 95.1 347 94.9 L348.8 95.1 Q350.8 96 350.3 98 L349.7 103.5 Q348.8 105.5 345.8 106.7 L344.1 107 Q340.8 107 340.6 104 Z" fill="#8d8d8d" stroke="#151515" stroke-width="1.5" stroke-linejoin="round"/>
<ellipse cx="346.6" cy="100.8" rx="2.1" ry="4.3" transform="rotate(22 346.6 100.8)" fill="#f7d70a"/>
<rect x="364.9" y="95.4" width="12.2" height="10.5" fill="#fff" stroke="#555" stroke-width="0.9"/>
<text x="367.1" y="103" font-size="7.2" font-family="Liberation Serif" fill="#3a3a3a" stroke="#3a3a3a" stroke-width="0.25" textLength="7.8" lengthAdjust="spacingAndGlyphs">A1</text>
<path d="M364.9 100.4 L362.5 100.4 L362.5 108.9" fill="none" stroke="#333" stroke-width="0.9"/>
<path d="M360.7 108.4 L364.3 108.4 L362.5 111.4 Z" fill="#111"/>
<path d="M385.8 101 Q387.5 95.2 393 94.9 Q397.8 95.2 399.6 98.8 L401 104.8 Q400.2 109.2 395 110.6 Q390.8 110.8 389.3 107.2 Z" fill="#505050" stroke="#262626" stroke-width="1"/>
<ellipse cx="391.6" cy="99.6" rx="5.6" ry="2.9" transform="rotate(-38 391.6 99.6)" fill="#a4a4a4" stroke="#2e2e2e" stroke-width="0.9"/>
<path d="M396.8 96.4 Q401.8 95.4 400.6 100.8" fill="none" stroke="#555" stroke-width="1"/>
<path d="M391 105.2 L397.6 104.4 L398.4 108.6 Q395 110.2 391.6 109 Z" fill="#e6d49c"/>
<circle cx="396.5" cy="101.5" r="0.9" fill="#d8c898"/><circle cx="398.6" cy="103.5" r="0.7" fill="#d8c898"/>
<path d="M393.4 100.4 Q387.2 101.2 384.9 105.4 Q384 109.6 386 111.8 Q387.8 107 393.2 103.6 Z" fill="#f5c80c" stroke="#8a7000" stroke-width="0.5"/>
<path d="M418.3 103.5 A6.7 4.1 0 0 1 425 99.4" fill="none" stroke="#dd4a50" stroke-width="3.3"/>
<path d="M431.7 103.5 A6.7 4.1 0 0 0 425 99.4" fill="none" stroke="#7cca8c" stroke-width="3.3"/>
<path d="M418.3 103.5 A6.7 4.1 0 0 0 424.5 107.6" fill="none" stroke="#d7141c" stroke-width="3.4"/>
<path d="M431.7 103.5 A6.7 4.1 0 0 1 426.5 107.6" fill="none" stroke="#1d8e3a" stroke-width="3.3"/>
<path d="M424 104.6 L427.6 107.6 L424 110.6 Z" fill="#d7141c"/>
<path d="M426.5 96.6 L423.4 99.4 L426.5 102.2 Z" fill="#7cca8c"/>
<path d="M420.5 101.7 L422.8 102.9 M427.4 104.5 L429.2 105.5" stroke="#f4f4f4" stroke-width="1.1"/>
<rect x="424" y="94.1" width="1.9" height="18.3" fill="#1e1e1e"/>
<path d="M442.3 108.2 Q444 101 447.4 97.2 Q448.5 95.6 450.2 95.8 L452.5 95.2 L455.5 94.8 Q458 94.9 458.8 97.2 L453.6 103.2 Q456 104 457.8 106.2 Q455 108.2 451.5 108.5 L447 111.4 Q444 111.8 442.3 108.2 Z" fill="#f6e7b4" stroke="#a8987a" stroke-width="0.9" stroke-linejoin="round"/>
<path d="M449.5 98.5 L452.5 95.6 M450.8 99.8 L455 95.4 M452 101 L457.2 96.4" stroke="#c8b48a" stroke-width="0.7"/>
<path d="M475.29 104.41 L469.3 110.6" stroke="#222" stroke-width="2.6" stroke-linecap="round"/>
<circle cx="479" cy="100.7" r="5.3" fill="#8fb8e0" stroke="#2b2b2b" stroke-width="1.3"/>
<path d="M499.06 105.74 L494.8 110.6" stroke="#222" stroke-width="2.6" stroke-linecap="round"/>
<circle cx="502" cy="102.8" r="4.2" fill="#8fb8e0" stroke="#2b2b2b" stroke-width="1.3"/>
<path d="M0 -2 L3 -2 L3 -4 L7 0 L3 4 L3 2 L0 2 Z" transform="translate(493.8,95.1) rotate(225) translate(-7,0)" fill="#ee1c24"/>
<path d="M0 -2 L3 -2 L3 -4 L7 0 L3 4 L3 2 L0 2 Z" transform="translate(510.5,95.1) rotate(315) translate(-7,0)" fill="#ee1c24"/>
<path d="M0 -2 L3 -2 L3 -4 L7 0 L3 4 L3 2 L0 2 Z" transform="translate(510.5,111.4) rotate(45) translate(-7,0)" fill="#ee1c24"/>
<rect x="0" y="118" width="1005" height="406" fill="#c1c2c7"/>
<rect x="0" y="117.5" width="1005" height="1.5" fill="#8a8a8a"/>
<rect x="0" y="118" width="2" height="406" fill="#8e8e8e"/>
<g>
<text x="790.5" y="501.5" font-size="13.6" fill="#b3b4b9" textLength="118.5" lengthAdjust="spacingAndGlyphs">Activate Windows</text>
<text x="790.5" y="517" font-size="10.6" fill="#b3b4b9" textLength="191" lengthAdjust="spacingAndGlyphs">Go to PC settings to activate Windows.</text>
<path d="M2 430.6 L254.7 448.8" stroke="#d0696e" stroke-width="1.1" stroke-dasharray="1.3 1.7" opacity="0.85"/>
<path d="M254.7 448.8 L229.5 524" stroke="#5cc25c" stroke-width="1.1" stroke-dasharray="1.3 2" opacity="0.8"/>
<path d="M254.7 448.8 L305.6 524" stroke="#4545cc" stroke-width="1.1" stroke-dasharray="1.3 2" opacity="0.75"/>
<path d="M27.3 119 L254.7 448.8" stroke="#3b3bcf" stroke-width="1.3"/>
<path d="M368 119 L254.7 448.8" stroke="#3dba42" stroke-width="1.3"/>
<path d="M254.7 448.8 L1005 505.6" stroke="#cc3f47" stroke-width="1.3"/>
<path d="M316.3 343.8 L323 360.5 L400.3 365.6 L396.9 349 Z" fill="#e3e3e3" stroke="#1a1a1a" stroke-width="1.3" stroke-linejoin="round"/>
<path d="M396.9 349 L409.7 291.3 L412.8 308.9 L400.3 365.6 Z" fill="#6f6f6f" stroke="#1a1a1a" stroke-width="1.3" stroke-linejoin="round"/>
<path d="M334.7 286.6 L409.7 291.3 L396.9 349 L316.3 343.8 Z" fill="#ffffff" stroke="#1a1a1a" stroke-width="1.2" stroke-linejoin="round"/>
<path d="M334.7 286.6 L409.7 291.3 L412.8 308.9 L400.3 365.6 L323 360.5 L316.3 343.8 Z" fill="none" stroke="#151515" stroke-width="1.9" stroke-linejoin="round"/>
<defs><pattern id="dots" x="0" y="0" width="3" height="6" patternUnits="userSpaceOnUse"><rect width="3" height="6" fill="#ffffff"/><rect x="1" y="1" width="1" height="1.2" fill="#a4a4ff"/><rect x="2.5" y="4" width="1" height="1.2" fill="#b8b8ff"/></pattern></defs>
<polygon points="624.34,352.39 619.65,368.06 610.75,382.38 598.07,394.64 582.25,404.23 564.09,410.66 544.49,413.61 524.45,412.94 504.96,408.67 487.00,401.03 471.47,390.39 459.15,377.29 450.66,362.39 446.43,346.43 446.66,330.21 451.35,314.54 460.25,300.22 472.93,287.96 488.75,278.37 506.91,271.94 526.51,268.99 546.55,269.66 566.04,273.93 584.00,281.57 599.53,292.21 611.85,305.31 620.34,320.21 624.57,336.17" fill="url(#dots)" stroke="#1414ff" stroke-width="2.4" stroke-linejoin="round"/>
<polyline points="618.72,367.70 609.91,381.83 597.38,393.92 581.74,403.37 563.78,409.71 544.41,412.62 524.59,411.95 505.31,407.74 487.55,400.20 472.19,389.70 460.01,376.78 451.62,362.08" fill="none" stroke="#e6e6ff" stroke-width="0.7"/>
<polyline points="609.25,381.38 596.83,393.34 581.33,402.68 563.54,408.95 544.34,411.82 524.69,411.16 505.59,406.99 487.99,399.53 472.77,389.15 460.70,376.37" fill="none" stroke="#3030ff" stroke-width="1"/>
<defs><pattern id="speck" width="4" height="4" patternUnits="userSpaceOnUse"><rect width="4" height="4" fill="#cf9f22"/><rect x="0" y="0" width="1" height="1" fill="#5a6a70"/><rect x="2" y="2" width="1" height="1" fill="#8a6a20"/><rect x="3" y="1" width="1" height="1" fill="#e0b030"/><rect x="1" y="3" width="1" height="1" fill="#6a5a30"/></pattern></defs>
<path d="M213.5 466.5 L221 472.5 L228.5 474.6" fill="none" stroke="#1a1008" stroke-width="3.4" stroke-linecap="round"/>
<path d="M213.5 466.5 L221 472.5 L228.5 474.6" fill="none" stroke="#7a4628" stroke-width="1.5" stroke-linecap="round"/>
<ellipse cx="220" cy="475.3" rx="2.8" ry="1.6" fill="#7a4628" stroke="#1a1008" stroke-width="1"/><ellipse cx="227.8" cy="474.6" rx="2.6" ry="1.7" fill="#7a4628" stroke="#1a1008" stroke-width="1"/>
<path d="M190.5 446 L199.5 444.2 L210 447.5 L223.8 452.2 Q220 455 215 455.6 L214.6 458.5 Q217.5 462.5 216.3 467.5 L210 467.3 Q205 464.5 203 462 Q197 457 193 451 Z" fill="url(#speck)" stroke="#1a1008" stroke-width="1.3" stroke-linejoin="round"/>
<path d="M188.8 440.2 Q190 437.4 196 437.9 Q200.5 438.8 201.8 443.5 L196.5 445.3 L190.6 444.6 Z" fill="#1a1008"/>
<ellipse cx="195.3" cy="441.2" rx="3.9" ry="1.9" fill="#8a5858" transform="rotate(14 195.3 441.2)"/>
<path d="M204 453.5 L209 455" stroke="#2a1a08" stroke-width="1.6"/>
</g>
<rect x="1005" y="118" width="19" height="406" fill="#f4f5f6"/>
<rect x="1008.5" y="121.5" width="16" height="69" fill="#f0f0f0" stroke="#a8a8a8" stroke-width="0.8"/>
<text transform="translate(1013.2,123) rotate(90)" font-size="9.5" fill="#444" textLength="48.5" lengthAdjust="spacingAndGlyphs">Default Tray</text>
<rect x="0" y="524" width="1024" height="22" fill="#f0f0f0"/>
<text x="54.8" y="540" font-size="10" fill="#151515" stroke="#151515" stroke-width="0.1" textLength="308.5" lengthAdjust="spacingAndGlyphs">Make an empty component or a component from the selected entities.</text>
<text x="799" y="540" font-size="10" fill="#151515" stroke="#151515" stroke-width="0.1" textLength="64" lengthAdjust="spacingAndGlyphs">Measurements</text>
<rect x="870.5" y="527.5" width="149.5" height="17" fill="#f0f0f0" stroke="#a9bccf" stroke-width="1"/>
<rect x="46" y="533" width="0.8" height="6" fill="#999"/>
<rect x="791" y="533" width="0.8" height="6" fill="#999"/>
<rect x="0" y="546" width="1024" height="30" fill="#a98294"/>
<circle cx="9.5" cy="535.2" r="5" fill="none" stroke="#b0b0b0" stroke-width="0.9"/>
<path d="M7.8 532.5 Q9.5 531 11.2 532.5 L10.6 536 L9.5 539 L8.4 536 Z" fill="#b9b9b9"/>
<circle cx="32.4" cy="535.2" r="5" fill="none" stroke="#111" stroke-width="1.1"/>
<circle cx="32.4" cy="532.2" r="1" fill="#111"/><path d="M31.2 533.5 L33.6 533.5 L33.4 538.5 L31.4 538.5 Z" fill="#111"/>
<path d="M0 546 L90 546 L60 576 L0 576 Z" fill="#a47d8f"/>
<path d="M90 546 L130 546 L110 576 L70 576 Z" fill="#9f788a"/>
<path d="M180 546 L260 546 L240 576 L200 576 Z" fill="#a27b8d"/>
<path d="M205 576 L230 556 L255 576 Z" fill="#96707f"/>
<path d="M300 546 L420 546 L400 576 L320 576 Z" fill="#a37c8e"/>
<path d="M600 546 L637 546 L619 558 Z" fill="#9a7485"/>
<path d="M600 558 L640 558 L620 576 Z" fill="#b08a9b"/>
<path d="M625 576 L637 558 L650 576 Z" fill="#9a7485"/>
<path d="M580 576 L596 556 L610 576 Z" fill="#8c6878"/>
<path d="M680 546 L720 546 L700 558 Z" fill="#9a7485"/>
<path d="M700 558 L740 558 L720 576 L680 576 Z" fill="#a27c8d"/>
<path d="M720 546 L1024 546 L1024 576 L740 576 Z" fill="#b18b9c"/>
<path d="M960 546 L1024 546 L1024 576 Z" fill="#b48e9f"/>
<rect x="132.4" y="547" width="42.1" height="27.6" fill="#ffffff" fill-opacity="0.16" stroke="#ffffff" stroke-opacity="0.28" stroke-width="1"/>
<rect x="364.2" y="547" width="43.5" height="27.6" fill="#ffffff" fill-opacity="0.16" stroke="#ffffff" stroke-opacity="0.28" stroke-width="1"/>
<rect x="456.9" y="547" width="43.5" height="27.6" fill="#ffffff" fill-opacity="0.16" stroke="#ffffff" stroke-opacity="0.28" stroke-width="1"/>
<rect x="504.2" y="547" width="42.6" height="27.6" fill="#ffffff" fill-opacity="0.16" stroke="#ffffff" stroke-opacity="0.28" stroke-width="1"/>
<rect x="550.5" y="547" width="42.7" height="27.6" fill="#ffffff" fill-opacity="0.16" stroke="#ffffff" stroke-opacity="0.28" stroke-width="1"/>
<path d="M9.2 553.5 L17.5 552.3 L17.5 560.4 L9.2 560.4 Z M18.7 552.1 L28.3 550.8 L28.3 560.4 L18.7 560.4 Z M9.2 561.6 L17.5 561.6 L17.5 569.6 L9.2 568.5 Z M18.7 561.6 L28.3 561.6 L28.3 571 L18.7 569.8 Z" fill="#ffffff"/>
<defs><linearGradient id="opg" x1="0" y1="0" x2="1" y2="1"><stop offset="0" stop-color="#f0202c"/><stop offset="0.55" stop-color="#d8121f"/><stop offset="1" stop-color="#ff5a5a"/></linearGradient></defs>
<path d="M60.8 549.7 A10.8 11.1 0 1 1 60.79 549.7 Z M60.8 552.7 A5.6 8.1 0 1 0 60.81 552.7 Z" fill="url(#opg)" fill-rule="evenodd"/>
<rect x="95.6" y="551.8" width="22" height="17.6" fill="#f4f4f4" stroke="#9a9a9a" stroke-width="0.8"/>
<rect x="97.6" y="554.8" width="9" height="12" fill="#4f8fb0"/>
<path d="M97.6 566.8 L106.6 556 L106.6 566.8 Z" fill="#5aa063"/>
<rect x="108.1" y="555.5" width="5" height="1.3" fill="#c8c8c8"/>
<rect x="108.1" y="558.1" width="5" height="1.3" fill="#c8c8c8"/>
<rect x="108.1" y="560.7" width="5" height="1.3" fill="#c8c8c8"/>
<rect x="108.1" y="563.3" width="5" height="1.3" fill="#c8c8c8"/>
<rect x="114.6" y="554.5" width="1.5" height="7" fill="#3a8a5a"/>
<rect x="235.5" y="551.8" width="22" height="17.6" fill="#f4f4f4" stroke="#9a9a9a" stroke-width="0.8"/>
<rect x="237.5" y="554.8" width="9" height="12" fill="#4f8fb0"/>
<path d="M237.5 566.8 L246.5 556 L246.5 566.8 Z" fill="#5aa063"/>
<rect x="248" y="555.5" width="5" height="1.3" fill="#c8c8c8"/>
<rect x="248" y="558.1" width="5" height="1.3" fill="#c8c8c8"/>
<rect x="248" y="560.7" width="5" height="1.3" fill="#c8c8c8"/>
<rect x="248" y="563.3" width="5" height="1.3" fill="#c8c8c8"/>
<rect x="254.5" y="554.5" width="1.5" height="7" fill="#3a8a5a"/>
<rect x="327.5" y="551.8" width="22" height="17.6" fill="#f4f4f4" stroke="#9a9a9a" stroke-width="0.8"/>
<rect x="329.5" y="554.8" width="9" height="12" fill="#4f8fb0"/>
<path d="M329.5 566.8 L338.5 556 L338.5 566.8 Z" fill="#5aa063"/>
<rect x="340" y="555.5" width="5" height="1.3" fill="#c8c8c8"/>
<rect x="340" y="558.1" width="5" height="1.3" fill="#c8c8c8"/>
<rect x="340" y="560.7" width="5" height="1.3" fill="#c8c8c8"/>
<rect x="340" y="563.3" width="5" height="1.3" fill="#c8c8c8"/>
<rect x="346.5" y="554.5" width="1.5" height="7" fill="#3a8a5a"/>
<path d="M141.8 555.5 L144 552.5 L150 552.5 L151.5 554 L165 554 L165 569 L141.8 569 Z" fill="#f1cf6f"/>
<rect x="143" y="553.2" width="3" height="1.5" fill="#4caf50"/><rect x="151" y="553.8" width="2.2" height="1.6" fill="#e53935"/><rect x="157" y="554.5" width="2.5" height="1.5" fill="#42a5f5"/>
<rect x="141.8" y="557" width="23.2" height="12" fill="#f7de93"/>
<path d="M145 563.5 L162 563.5 L162 572.5 L158.5 572.5 L158.5 568 L148.5 568 L148.5 572.5 L145 572.5 Z" fill="#74b7ee"/>
<rect x="190.4" y="550.4" width="19.6" height="18.9" fill="#2a1805" stroke="#ff8a0a" stroke-width="1.6"/>
<text x="193.6" y="564.2" font-size="13.5" fill="#ff9a10" textLength="11.6" lengthAdjust="spacingAndGlyphs">Ai</text>
<rect x="283" y="550.4" width="19.8" height="18.9" fill="#001e36" stroke="#31a8ff" stroke-width="1.5"/>
<text x="285.8" y="564.2" font-size="13.2" fill="#31a8ff" textLength="13" lengthAdjust="spacingAndGlyphs">Ps</text>
<path d="M377.6 549.4 L395.4 549.4 L395.4 570.2 L374.6 570.2 L374.6 552.6 Z" fill="#fbfdff" stroke="#3b6db3" stroke-width="0.9"/>
<path d="M386 549.8 L395 549.8 L395 563 L390 565 Z" fill="#cfe2f5"/>
<path d="M377.6 552.8 L380.8 552.8 L382.6 560.2 L384.4 552.8 L386.8 552.8 L388.6 560.2 L390.3 552.8 L392.4 552.8 L389.8 564.4 L387.4 564.4 L385.6 557.4 L383.8 564.4 L381.4 564.4 Z" fill="#1d5cb5"/>
<path d="M388 568 L396 562.8 L395.4 570.2 L384 570.2 Z" fill="#ffffff"/>
<path d="M378 567 L386 567.5 M379 568.6 L385 568.8" stroke="#bcd0e6" stroke-width="0.5"/>
<circle cx="432.7" cy="560.7" r="12" fill="#1ea0db"/>
<path d="M421 557 Q425 548 434 548.7 Q444 549.5 445 558 Q445 563 439 563 L428.5 563 Q430 568 436 568.5 Q441 568.5 443.5 566.5 Q440 572.5 432.5 572.7 Q424 572.5 421.5 566 Q420 561 421 557 Z" fill="#1f8fd8"/>
<path d="M434 548.7 Q444 549.5 445 558 Q445 563 439 563 L436 563 Q440 560 437 555.5 Q434 552 428 553 Q430 549 434 548.7 Z" fill="#5ed25a"/>
<path d="M428.5 563 Q430 568 436 568.5 Q441 568.5 443.5 566.5 Q440 572.5 432.5 572.7 Q426 572 424 567 Q426 559 433 557 Q429 560 428.5 563 Z" fill="#0c59a4"/>
<circle cx="478.8" cy="560.6" r="10.6" fill="#1a9fe6"/>
<circle cx="471.5" cy="553.5" r="4" fill="#1a9fe6"/><circle cx="486" cy="567.6" r="4" fill="#1a9fe6"/>
<text x="473.2" y="565.6" font-size="14" font-weight="bold" fill="#ffffff">S</text>
<circle cx="525.5" cy="560.9" r="11.3" fill="#db4437"/>
<path d="M525.5 560.9 L515.7 555.2 A11.3 11.3 0 0 0 519.8 570.7 Z" fill="#0f9d58"/>
<path d="M525.5 560.9 L519.8 570.7 A11.3 11.3 0 0 0 536.8 560.9 Z" fill="#f4b400"/>
<path d="M525.5 560.9 L536.8 560.9 A11.3 11.3 0 0 0 535.3 555.2 L525.5 555.2 Z" fill="#db4437"/>
<circle cx="525.5" cy="560.9" r="5.3" fill="#ffffff"/><circle cx="525.5" cy="560.9" r="4.2" fill="#4285f4"/>
<rect x="560.2" y="549.1" width="23.4" height="23.5" fill="#f6f7f8" stroke="#b8cde0" stroke-width="0.7"/>
<path d="M571.9 552.3 L579.6 556 Q580.3 556.5 580.3 557.3 L580.3 564.8 Q580.3 565.6 579.6 566 L571.9 569.7 L564.3 566 Q563.8 565.7 563.8 565 L563.8 557.2 Q563.8 556.5 564.3 556.2 Z" fill="#1b6db4"/>
<path d="M564 558.6 L571.9 562.4 L571.9 569.5 M564 562.6 L569.6 565.3 M567 556.8 L571.9 554.5 L577.4 557.2 L577.4 564.3 L574.3 565.9 M571.9 562.4 L571.9 557.5 L574.8 558.9 L574.8 563.5" fill="none" stroke="#eaf3fb" stroke-width="1"/>
<rect x="776.8" y="556" width="11.8" height="11.6" rx="3" fill="#6aab2b"/>
<path d="M779.5 561.8 L781.8 564 L786 559.5" fill="none" stroke="#fff" stroke-width="1.4"/>
<rect x="794.7" y="555.6" width="11" height="11.8" fill="#2f8fde"/>
<rect x="796.5" y="557.5" width="7.5" height="7" fill="none" stroke="#fff" stroke-width="0.8"/><rect x="794.7" y="565.5" width="4" height="2" fill="#f5a623"/>
<rect x="813" y="564" width="1.5" height="2.5" fill="#f4f4f4"/>
<rect x="815.3" y="562.5" width="1.5" height="4" fill="#f4f4f4"/>
<rect x="817.6" y="561" width="1.5" height="5.5" fill="#f4f4f4"/>
<rect x="819.9" y="559.5" width="1.5" height="7" fill="#f4f4f4"/>
<rect x="822.2" y="557.5" width="1.5" height="9" fill="#f4f4f4"/>
<circle cx="836.7" cy="561.6" r="5.6" fill="none" stroke="#2f7fd0" stroke-width="1.1"/>
<text x="832.5" y="563.2" font-size="4.2" fill="#2f7fd0" font-weight="bold">DELL</text>
<ellipse cx="854.3" cy="561.7" rx="4.4" ry="5.2" fill="none" stroke="#e0202e" stroke-width="2"/>
<path d="M867.5 562 L870 559 L878.5 559 L879.5 562 L879.5 566 L867.5 566 Z" fill="#d8d8d8" stroke="#aaa" stroke-width="0.5"/>
<path d="M871 563.5 L873.5 566 L879 559" fill="none" stroke="#3cba3c" stroke-width="1.5"/>
<path d="M885.5 556 L885.5 568 M885.5 557 L891 557 L896 560 L891 562.5 L885.5 562.5" fill="none" stroke="#f2f2f2" stroke-width="1.1"/>
<path d="M887 557.5 L891 557.5 L894.5 560 L891 562 L887 562 Z" fill="#f6f6f6"/>
<rect x="908.5" y="557.5" width="5.5" height="9.5" fill="none" stroke="#f2f2f2" stroke-width="1.1"/><rect x="909.8" y="562" width="3" height="4" fill="#f2f2f2"/>
<path d="M905 556 L905 567.5 M903.5 558.5 L906.5 558.5" stroke="#f2f2f2" stroke-width="1.1"/>
<path d="M922.5 559.5 L925 559.5 L928.5 556.5 L928.5 566.8 L925 563.8 L922.5 563.8 Z" fill="#f2f2f2"/>
<path d="M930 559.5 Q931.5 561.6 930 563.8" fill="none" stroke="#d8c8d0" stroke-width="0.8"/>
<text x="943" y="564.8" font-size="10" fill="#fcf8fa" stroke="#fcf8fa" stroke-width="0.1" textLength="17" lengthAdjust="spacingAndGlyphs">ENG</text>
<text x="976.8" y="558.5" font-size="10" fill="#fcf8fa" stroke="#fcf8fa" stroke-width="0.1" textLength="30.7" lengthAdjust="spacingAndGlyphs">5:54 PM</text>
<text x="973" y="571.2" font-size="10" fill="#fcf8fa" stroke="#fcf8fa" stroke-width="0.1" textLength="38" lengthAdjust="spacingAndGlyphs">5/27/2021</text>
<rect x="668.0" y="6" width="2.5" height="335.5" fill="#000" opacity="0.25"/>
<rect x="519.5" y="340.0" width="151.0" height="2.5" fill="#000" opacity="0.25"/>
<rect x="514.5" y="1" width="153.0" height="338.5" fill="#f0f0f0" stroke="#979797" stroke-width="1"/>
<rect x="537" y="3" width="1" height="334" fill="#e2e2e2"/>
<rect x="538" y="3" width="1" height="334" fill="#fcfcfc"/>
<rect x="538" y="55" width="128" height="1" fill="#dcdcdc"/>
<rect x="538" y="56" width="128" height="1" fill="#fcfcfc"/>
<rect x="517" y="107.5" width="148.5" height="16.2" rx="1" fill="#d1e2f2" stroke="#9fc3e6" stroke-width="1"/>
<text x="540.6" y="14.60" font-size="9.9" fill="#151515" stroke="#151515" stroke-width="0.12" textLength="40.20" lengthAdjust="spacingAndGlyphs">Entity Info</text>
<text x="540.6" y="31.00" font-size="9.9" fill="#151515" stroke="#151515" stroke-width="0.12" textLength="20.20" lengthAdjust="spacingAndGlyphs">Erase</text>
<text x="540.6" y="47.40" font-size="9.9" fill="#151515" stroke="#151515" stroke-width="0.12" textLength="18.60" lengthAdjust="spacingAndGlyphs">Hide</text>
<text x="540.6" y="69.00" font-size="9.9" fill="#8d8d8d" stroke="#8d8d8d" stroke-width="0.12" textLength="30.60" lengthAdjust="spacingAndGlyphs">Explode</text>
<text x="540.6" y="85.45" font-size="9.9" fill="#151515" stroke="#151515" stroke-width="0.12" textLength="23.00" lengthAdjust="spacingAndGlyphs">Select</text>
<path d="M656 79.45 L659.2 82.15 L656 84.85 Z" fill="#1e1e1e"/>
<text x="540.6" y="101.90" font-size="9.9" fill="#151515" stroke="#151515" stroke-width="0.12" textLength="17.60" lengthAdjust="spacingAndGlyphs">Area</text>
<path d="M656 95.90 L659.2 98.60 L656 101.30 Z" fill="#1e1e1e"/>
<text x="540.6" y="118.35" font-size="9.9" fill="#151515" stroke="#151515" stroke-width="0.12" textLength="78.50" lengthAdjust="spacingAndGlyphs">Make Component...</text>
<text x="540.6" y="134.80" font-size="9.9" fill="#151515" stroke="#151515" stroke-width="0.12" textLength="48.35" lengthAdjust="spacingAndGlyphs">Make Group</text>
<text x="540.6" y="151.25" font-size="9.9" fill="#151515" stroke="#151515" stroke-width="0.12" textLength="57.70" lengthAdjust="spacingAndGlyphs">Intersect Faces</text>
<path d="M656 145.25 L659.2 147.95 L656 150.65 Z" fill="#1e1e1e"/>
<text x="540.6" y="167.70" font-size="9.9" fill="#151515" stroke="#151515" stroke-width="0.12" textLength="54.00" lengthAdjust="spacingAndGlyphs">Reverse Faces</text>
<text x="540.6" y="184.15" font-size="9.9" fill="#151515" stroke="#151515" stroke-width="0.12" textLength="40.35" lengthAdjust="spacingAndGlyphs">Flip Along</text>
<path d="M656 178.15 L659.2 180.85 L656 183.55 Z" fill="#1e1e1e"/>
<text x="540.6" y="200.60" font-size="9.9" fill="#151515" stroke="#151515" stroke-width="0.12" textLength="45.70" lengthAdjust="spacingAndGlyphs">Weld Edges</text>
<text x="540.6" y="217.05" font-size="9.9" fill="#151515" stroke="#151515" stroke-width="0.12" textLength="76.90" lengthAdjust="spacingAndGlyphs">Convert to Polygon</text>
<text x="540.6" y="233.50" font-size="9.9" fill="#151515" stroke="#151515" stroke-width="0.12" textLength="45.70" lengthAdjust="spacingAndGlyphs">Find Center</text>
<text x="540.6" y="249.95" font-size="9.9" fill="#151515" stroke="#151515" stroke-width="0.12" textLength="56.20" lengthAdjust="spacingAndGlyphs">Explode Curve</text>
<text x="540.6" y="266.40" font-size="9.9" fill="#151515" stroke="#151515" stroke-width="0.12" textLength="85.85" lengthAdjust="spacingAndGlyphs">Soften/Smooth Edges</text>
<text x="540.6" y="282.85" font-size="9.9" fill="#151515" stroke="#151515" stroke-width="0.12" textLength="61.80" lengthAdjust="spacingAndGlyphs">Zoom Selection</text>
<text x="540.6" y="299.30" font-size="9.9" fill="#151515" stroke="#151515" stroke-width="0.12" textLength="62.10" lengthAdjust="spacingAndGlyphs">V-Ray Object ID</text>
<path d="M656 293.30 L659.2 296.00 L656 298.70 Z" fill="#1e1e1e"/>
<text x="540.6" y="315.75" font-size="9.9" fill="#151515" stroke="#151515" stroke-width="0.12" textLength="60.70" lengthAdjust="spacingAndGlyphs">V-Ray UV Tools</text>
<path d="M656 309.75 L659.2 312.45 L656 315.15 Z" fill="#1e1e1e"/>
<text x="540.6" y="332.20" font-size="9.9" fill="#151515" stroke="#151515" stroke-width="0.12" textLength="76.30" lengthAdjust="spacingAndGlyphs">Camera Focus Tool</text>
</svg>
</body></html>
